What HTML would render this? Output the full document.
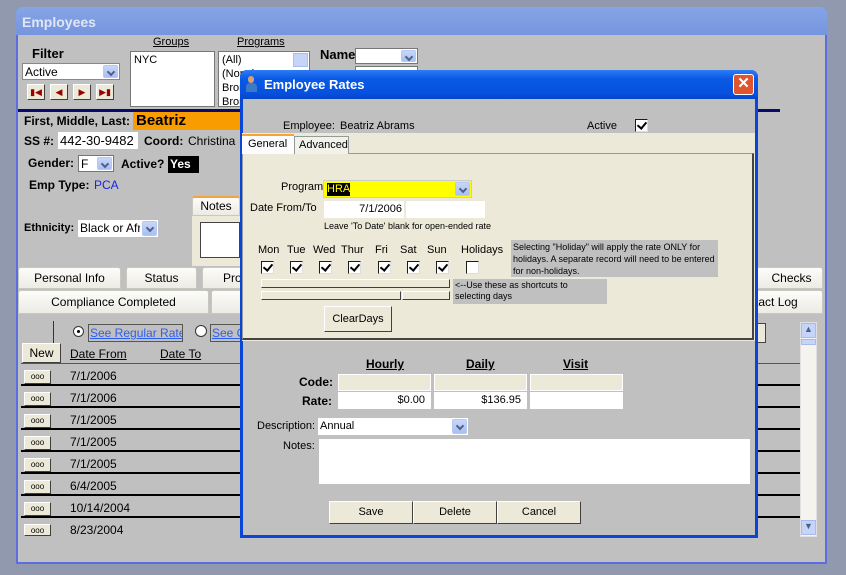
<!DOCTYPE html>
<html><head><meta charset="utf-8"><style>
*{box-sizing:border-box;margin:0;padding:0}
body{width:846px;height:575px;background:#9199ae;font-family:"Liberation Sans",sans-serif;font-size:12px;color:#000;position:relative;overflow:hidden}
.a{position:absolute;white-space:nowrap}
.b{font-weight:bold}
.w{background:#fff}
.dd{position:absolute;width:15px;top:1px;bottom:1px;right:1px;background:linear-gradient(#c8d6fb,#a9bff3);border:1px solid #b7c9f2;border-radius:2px}
.dd:after{content:"";position:absolute;left:4px;top:3px;width:4px;height:4px;border-right:2px solid #4d6185;border-bottom:2px solid #4d6185;transform:rotate(45deg)}
.btn{position:absolute;background:#ece9d8;border:1px solid #fff;border-right-color:#404040;border-bottom-color:#404040;text-align:center}
.cb{position:absolute;width:13px;height:13px;background:#fff;border:1px solid #1c1c1c;border-right-color:#ddd;border-bottom-color:#ddd}
.cb.c:after{content:"";position:absolute;left:3px;top:0px;width:4px;height:7px;border-right:2px solid #000;border-bottom:2px solid #000;transform:rotate(40deg)}
.tab{position:absolute;background:linear-gradient(#fcfcfa,#ecebe4);border:1px solid #c8c8c0;border-radius:3px 3px 0 0;text-align:center}
.row{position:absolute;left:21px;width:779px;height:2px;background:#000}
.rb{position:absolute;left:24px;width:27px;height:14px;background:#ece9d8;border:1px solid #fff;border-right-color:#404040;border-bottom-color:#404040;font-size:8px;text-align:center;line-height:12px}
.u{text-decoration:underline}
</style></head><body>
<div class="a" style="left:16px;top:7px;width:811px;height:557px;background:#c0c0c0;border:2px solid #5a6ee2;border-top:none;border-radius:6px 6px 0 0"></div>
<div class="a" style="left:16px;top:7px;width:811px;height:28px;background:linear-gradient(#86a4e6,#7595de);border-radius:6px 6px 0 0"></div>
<div class="a b" style="left:22px;top:14px;font-size:14px;color:#dfe6f6">Employees</div>

<div class="a b" style="left:32px;top:46px;font-size:13px">Filter</div>
<div class="a w" style="left:22px;top:63px;width:98px;height:17px;border:1px solid #888"><span style="position:absolute;left:2px;top:1px">Active</span><div class="dd"></div></div>
<div class="btn" style="left:27px;top:84px;width:18px;height:16px;color:#900;font-size:9px;line-height:14px">▮◀</div>
<div class="btn" style="left:50px;top:84px;width:18px;height:16px;color:#900;font-size:9px;line-height:14px">◀</div>
<div class="btn" style="left:73px;top:84px;width:18px;height:16px;color:#900;font-size:9px;line-height:14px">▶</div>
<div class="btn" style="left:96px;top:84px;width:18px;height:16px;color:#900;font-size:9px;line-height:14px">▶▮</div>

<div class="a u" style="left:153px;top:36px;font-size:11px">Groups</div>
<div class="a w" style="left:130px;top:51px;width:85px;height:56px;border:1px solid #777"><span style="position:absolute;left:3px;top:2px;font-size:11px">NYC</span></div>
<div class="a u" style="left:237px;top:36px;font-size:11px">Programs</div>
<div class="a w" style="left:218px;top:51px;width:92px;height:56px;border:1px solid #777;font-size:11px;line-height:14px;padding:1px 3px;overflow:hidden">(All)<br>(None)<br>Bronx<br>Bronx</div>
<div class="a" style="left:293px;top:53px;width:15px;height:14px;background:#c6d4f9;border:1px solid #aabfee"></div>
<div class="a b" style="left:320px;top:47px;font-size:13px">Name</div>
<div class="a w" style="left:355px;top:48px;width:63px;height:16px;border:1px solid #777"><div class="dd"></div></div>
<div class="a w" style="left:355px;top:66px;width:63px;height:16px;border:1px solid #777"></div>

<div class="a" style="left:18px;top:109px;width:762px;height:3px;background:#0a0a6a"></div>
<div class="a b" style="left:24px;top:114px">First, Middle, Last:</div>
<div class="a b" style="left:133px;top:112px;width:110px;height:18px;background:#f99c00;font-size:15px;padding-left:3px;line-height:18px">Beatriz</div>
<div class="a b" style="left:24px;top:134px">SS #:</div>
<div class="a w" style="left:58px;top:132px;width:80px;height:17px;padding-left:2px;font-size:13px;line-height:17px">442-30-9482</div>
<div class="a b" style="left:144px;top:134px">Coord:</div>
<div class="a" style="left:188px;top:134px">Christina</div>
<div class="a b" style="left:28px;top:156px">Gender:</div>
<div class="a w" style="left:78px;top:155px;width:36px;height:17px;border:1px solid #777"><span style="position:absolute;left:2px;top:1px">F</span><div class="dd"></div></div>
<div class="a b" style="left:121px;top:157px">Active?</div>
<div class="a b" style="left:168px;top:156px;width:31px;height:17px;background:#000;color:#fff;padding-left:2px;line-height:16px">Yes</div>
<div class="a b" style="left:29px;top:178px">Emp Type:</div>
<div class="a" style="left:94px;top:178px;color:#1a22ee">PCA</div>
<div class="tab" style="left:192px;top:196px;width:48px;height:20px;border-top:2px solid #f3a43a;line-height:16px">Notes</div>
<div class="a" style="left:192px;top:216px;width:48px;height:50px;background:#ece9d8"></div>
<div class="a w" style="left:200px;top:222px;width:40px;height:36px;border:1px solid #444"></div>
<div class="a b" style="left:24px;top:222px;font-size:11px">Ethnicity:</div>
<div class="a w" style="left:78px;top:220px;width:80px;height:17px"><span style="position:absolute;left:2px;top:1px;width:60px;overflow:hidden">Black or Afri</span><div class="dd"></div></div>

<div class="tab" style="left:18px;top:267px;width:103px;height:22px;line-height:20px">Personal Info</div>
<div class="tab" style="left:126px;top:267px;width:71px;height:22px;line-height:20px">Status</div>
<div class="tab" style="left:202px;top:267px;width:50px;height:22px;line-height:20px;text-align:left;padding-left:20px">Pro</div>
<div class="tab" style="left:740px;top:267px;width:83px;height:22px;line-height:20px;padding-left:20px">Checks</div>
<div class="tab" style="left:18px;top:290px;width:191px;height:24px;line-height:22px">Compliance Completed</div>
<div class="tab" style="left:211px;top:290px;width:40px;height:24px"></div>
<div class="tab" style="left:740px;top:290px;width:83px;height:24px;line-height:22px;text-align:left;overflow:hidden"><span style="position:absolute;left:-8px">Contact Log</span></div>

<div class="a" style="left:53px;top:321px;width:1px;height:22px;background:#333"></div>
<div class="a w" style="left:73px;top:326px;width:11px;height:11px;border-radius:50%;border:1px solid #333"><div style="position:absolute;left:3px;top:3px;width:3px;height:3px;background:#000;border-radius:50%"></div></div>
<div class="a" style="left:88px;top:324px;width:95px;height:18px;border:1px solid #555;color:#2e5ef0;padding-left:1px;line-height:16px;text-decoration:underline;overflow:hidden">See Regular Rates</div>
<div class="a w" style="left:195px;top:325px;width:12px;height:12px;border-radius:50%;border:1px solid #333"></div>
<div class="a" style="left:210px;top:324px;width:40px;height:18px;border:1px solid #555;color:#2e5ef0;padding-left:1px;line-height:16px;text-decoration:underline">See O</div>
<div class="a" style="left:757px;top:323px;width:9px;height:20px;background:#ece9d8;border:1px solid #444;border-left:none"></div>
<div class="btn" style="left:22px;top:343px;width:39px;height:20px;line-height:18px">New</div>
<div class="a u" style="left:70px;top:347px">Date From</div>
<div class="a u" style="left:160px;top:347px">Date To</div>
<div class="row" style="top:363px;height:1px;background:#555"></div>
<div class="row" style="top:384px"></div><div class="row" style="top:406px"></div><div class="row" style="top:428px"></div><div class="row" style="top:450px"></div><div class="row" style="top:472px"></div><div class="row" style="top:494px"></div><div class="row" style="top:516px"></div>
<div class="rb" style="top:370px">ooo</div><div class="a" style="left:70px;top:369px">7/1/2006</div>
<div class="rb" style="top:392px">ooo</div><div class="a" style="left:70px;top:391px">7/1/2006</div>
<div class="rb" style="top:414px">ooo</div><div class="a" style="left:70px;top:413px">7/1/2005</div>
<div class="rb" style="top:436px">ooo</div><div class="a" style="left:70px;top:435px">7/1/2005</div>
<div class="rb" style="top:458px">ooo</div><div class="a" style="left:70px;top:457px">7/1/2005</div>
<div class="rb" style="top:480px">ooo</div><div class="a" style="left:70px;top:479px">6/4/2005</div>
<div class="rb" style="top:502px">ooo</div><div class="a" style="left:70px;top:501px">10/14/2004</div>
<div class="rb" style="top:524px;height:12px">ooo</div><div class="a" style="left:70px;top:523px">8/23/2004</div>
<div class="a" style="left:800px;top:322px;width:17px;height:215px;background:#f4f3ee;border:1px solid #e0e0e0"></div>
<div class="a" style="left:801px;top:323px;width:15px;height:15px;background:#c6d4f9;border:1px solid #a9bbe9;font-size:9px;text-align:center;color:#4d6185">▲</div>
<div class="a" style="left:801px;top:339px;width:15px;height:6px;background:#c6d4f9;border:1px solid #a9bbe9"></div>
<div class="a" style="left:801px;top:520px;width:15px;height:15px;background:#c6d4f9;border:1px solid #a9bbe9;font-size:9px;text-align:center;color:#4d6185">▼</div>

<div class="a" style="left:240px;top:70px;width:518px;height:468px;background:#c0c0c0;border:3px solid #0946d8;border-top:none;border-radius:7px 7px 0 0"></div>
<div class="a" style="left:240px;top:70px;width:518px;height:29px;background:linear-gradient(#2f7cf5,#0a5ae6 30%,#0651de 80%,#0546c8);border-radius:7px 7px 0 0"></div>
<div class="a" style="left:246px;top:76px;width:10px;height:16px"><div style="position:absolute;left:2px;top:0;width:6px;height:7px;background:#d9a070;border-radius:3px"></div><div style="position:absolute;left:0;top:7px;width:11px;height:9px;background:#3c79c8;border-radius:4px 4px 0 0"></div></div>
<div class="a b" style="left:264px;top:77px;font-size:13px;color:#fff">Employee Rates</div>
<div class="a" style="left:733px;top:74px;width:21px;height:21px;background:#e0552e;border:1px solid #fff;border-radius:3px;color:#fff;font-size:15px;text-align:center;line-height:18px;font-weight:bold">✕</div>
<div class="a" style="left:283px;top:120px;font-size:11px">Employee:</div>
<div class="a" style="left:340px;top:120px;font-size:11px">Beatriz Abrams</div>
<div class="a" style="left:587px;top:120px;font-size:11px">Active</div>
<div class="cb c" style="left:635px;top:119px"></div>
<div class="a" style="left:242px;top:133px;width:513px;height:208px;background:#ece9d8"></div>
<div class="a" style="left:242px;top:153px;width:512px;height:187px;border:1px solid #919b9c;border-right:2px solid #444;border-bottom:2px solid #444"></div>
<div class="a" style="left:242px;top:134px;width:52px;height:20px;background:#fcfcfe;border-top:2px solid #f7a531;font-size:11px;padding:2px 0 0 6px">General</div>
<div class="a" style="left:294px;top:136px;width:55px;height:18px;background:#f2f1ea;border:1px solid #919b9c;border-bottom:none;font-size:11px;padding:2px 0 0 4px">Advanced</div>
<div class="a" style="left:281px;top:181px;font-size:11px">Program</div>
<div class="a" style="left:323px;top:180px;width:149px;height:18px;background:#ffff00;border:1px solid #ccc"><span style="position:absolute;left:3px;top:2px;background:#000;color:#ff0;font-size:11px;line-height:13px">HRA</span><div class="dd"></div></div>
<div class="a" style="left:250px;top:202px;font-size:11px">Date From/To</div>
<div class="a w" style="left:324px;top:201px;width:80px;height:17px;text-align:right;padding-right:2px;font-size:11px;line-height:16px">7/1/2006</div>
<div class="a w" style="left:406px;top:201px;width:79px;height:17px"></div>
<div class="a" style="left:324px;top:221px;font-size:9px">Leave 'To Date' blank for open-ended rate</div>
<div class="a" style="left:258px;top:244px;font-size:11px">Mon</div>
<div class="a" style="left:287px;top:244px;font-size:11px">Tue</div>
<div class="a" style="left:313px;top:244px;font-size:11px">Wed</div>
<div class="a" style="left:341px;top:244px;font-size:11px">Thur</div>
<div class="a" style="left:375px;top:244px;font-size:11px">Fri</div>
<div class="a" style="left:400px;top:244px;font-size:11px">Sat</div>
<div class="a" style="left:427px;top:244px;font-size:11px">Sun</div>
<div class="a" style="left:461px;top:244px;font-size:11px">Holidays</div>
<div class="cb c" style="left:261px;top:261px"></div><div class="cb c" style="left:290px;top:261px"></div><div class="cb c" style="left:319px;top:261px"></div><div class="cb c" style="left:348px;top:261px"></div><div class="cb c" style="left:378px;top:261px"></div><div class="cb c" style="left:407px;top:261px"></div><div class="cb c" style="left:436px;top:261px"></div><div class="cb" style="left:466px;top:261px"></div>
<div class="a" style="left:511px;top:240px;width:207px;height:37px;background:#c0c0c0;font-size:9px;line-height:12px;padding:1px 2px;white-space:normal">Selecting "Holiday" will apply the rate ONLY for holidays. A separate record will need to be entered for non-holidays.</div>
<div class="btn" style="left:261px;top:279px;width:189px;height:9px"></div>
<div class="btn" style="left:261px;top:291px;width:140px;height:9px"></div>
<div class="btn" style="left:402px;top:291px;width:48px;height:9px"></div>
<div class="a" style="left:453px;top:279px;width:154px;height:25px;background:#c0c0c0;font-size:9px;line-height:11px;padding:1px 2px;white-space:normal">&lt;--Use these as shortcuts to selecting days</div>
<div class="btn" style="left:324px;top:306px;width:68px;height:26px;line-height:24px;font-size:11px">ClearDays</div>

<div class="a b u" style="left:366px;top:357px">Hourly</div>
<div class="a b u" style="left:466px;top:357px">Daily</div>
<div class="a b u" style="left:563px;top:357px">Visit</div>
<div class="a b" style="left:299px;top:375px">Code:</div>
<div class="a b" style="left:302px;top:394px">Rate:</div>
<div class="a" style="left:338px;top:374px;width:93px;height:17px;background:#ece9d8;border:1px solid #fff"></div>
<div class="a" style="left:434px;top:374px;width:93px;height:17px;background:#ece9d8;border:1px solid #fff"></div>
<div class="a" style="left:530px;top:374px;width:93px;height:17px;background:#ece9d8;border:1px solid #fff"></div>
<div class="a w" style="left:338px;top:392px;width:93px;height:17px;text-align:right;padding-right:6px;font-size:11px;line-height:16px">$0.00</div>
<div class="a w" style="left:434px;top:392px;width:93px;height:17px;text-align:right;padding-right:6px;font-size:11px;line-height:16px">$136.95</div>
<div class="a w" style="left:530px;top:392px;width:93px;height:17px"></div>
<div class="a" style="left:257px;top:420px;font-size:11px">Description:</div>
<div class="a w" style="left:318px;top:418px;width:150px;height:17px"><span style="position:absolute;left:2px;top:2px;font-size:11px">Annual</span><div class="dd"></div></div>
<div class="a" style="left:283px;top:440px;font-size:11px">Notes:</div>
<div class="a w" style="left:319px;top:439px;width:431px;height:45px"></div>
<div class="btn" style="left:329px;top:501px;width:84px;height:23px;line-height:21px;font-size:11px">Save</div>
<div class="btn" style="left:413px;top:501px;width:84px;height:23px;line-height:21px;font-size:11px">Delete</div>
<div class="btn" style="left:497px;top:501px;width:84px;height:23px;line-height:21px;font-size:11px">Cancel</div>
</body></html>
